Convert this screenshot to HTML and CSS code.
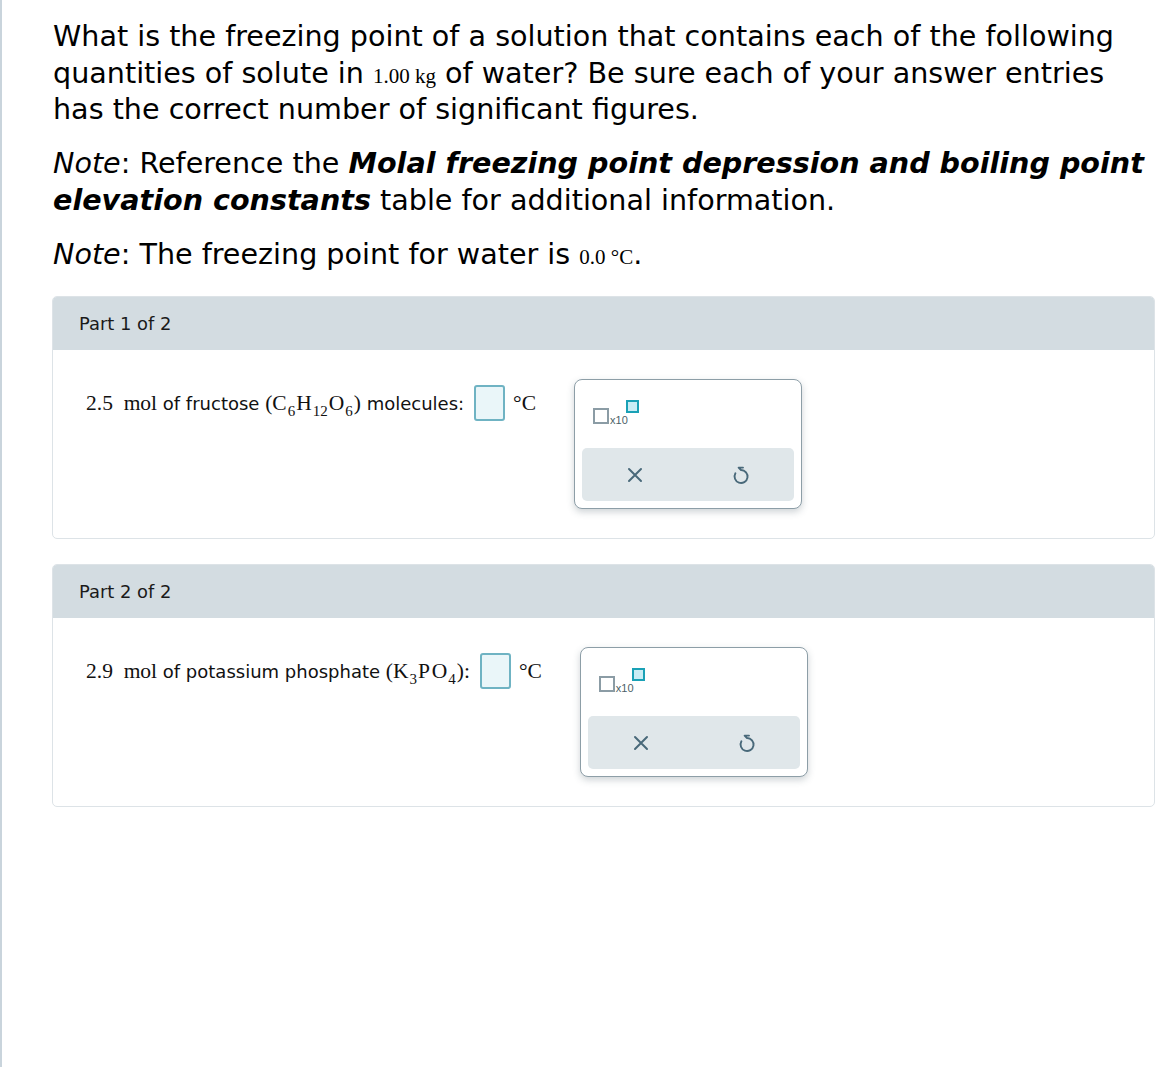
FILE: index.html
```html
<!DOCTYPE html>
<html>
<head>
<meta charset="utf-8">
<link rel="stylesheet" href="styles.css">
</head>
<body>
<div class="page">
  <p class="lead">What is the freezing point of a solution that contains each of the following quantities of solute in <span class="math">1.00 kg</span> of water? Be sure each of your answer entries has the correct number of significant figures.</p>
  <p class="lead"><i>Note</i>: Reference the <b><i>Molal freezing point depression and boiling point elevation constants</i></b> table for additional information.</p>
  <p class="lead"><i>Note</i>: The freezing point for water is <span class="math">0.0 °C</span>.</p>

  <section class="card">
    <div class="card-head">Part 1 of 2</div>
    <div class="card-body">
      <div class="question">
        <span class="q-text"><span class="m">2.5&nbsp;&nbsp;mol</span> of fructose <span class="m">(C<sub>6</sub>H<sub>12</sub>O<sub>6</sub>)</span> molecules:</span>
        <span class="answer"></span>
        <span class="m unit">°C</span>
      </div>
      <div class="tool">
        <div class="tool-top">
          <span class="sci"><span class="sq"></span><span class="x10">x10</span><span class="sup"></span></span>
        </div>
        <div class="tool-bar">
          <button class="tbtn"><svg width="16" height="16" viewBox="0 0 16 16"><path d="M2 2L14 14M14 2L2 14" stroke="#49697a" stroke-width="2" fill="none" stroke-linecap="round"/></svg></button>
          <button class="tbtn"><svg width="18" height="20" viewBox="0 0 18 20"><path d="M11 2.6H6.6L9 5A6.5 6.5 0 1 1 3.4 8.3" stroke="#49697a" stroke-width="1.9" fill="none" stroke-linecap="round" stroke-linejoin="round"/></svg></button>
        </div>
      </div>
    </div>
  </section>

  <section class="card">
    <div class="card-head">Part 2 of 2</div>
    <div class="card-body">
      <div class="question">
        <span class="q-text"><span class="m">2.9&nbsp;&nbsp;mol</span> of potassium phosphate <span class="m">(K<sub>3</sub>P&#8202;O<sub>4</sub>):</span></span>
        <span class="answer"></span>
        <span class="m unit">°C</span>
      </div>
      <div class="tool">
        <div class="tool-top">
          <span class="sci"><span class="sq"></span><span class="x10">x10</span><span class="sup"></span></span>
        </div>
        <div class="tool-bar">
          <button class="tbtn"><svg width="16" height="16" viewBox="0 0 16 16"><path d="M2 2L14 14M14 2L2 14" stroke="#49697a" stroke-width="2" fill="none" stroke-linecap="round"/></svg></button>
          <button class="tbtn"><svg width="18" height="20" viewBox="0 0 18 20"><path d="M11 2.6H6.6L9 5A6.5 6.5 0 1 1 3.4 8.3" stroke="#49697a" stroke-width="1.9" fill="none" stroke-linecap="round" stroke-linejoin="round"/></svg></button>
        </div>
      </div>
    </div>
  </section>
</div>
</body>
</html>
```
FILE: styles.css
```css
html, body {
  margin: 0;
  padding: 0;
  background: #fff;
}
body {
  font-family: "DejaVu Sans", Verdana, sans-serif;
  color: #000;
}
.page {
  border-left: 2px solid #c9d4dc;
  min-height: 1067px;
  box-sizing: border-box;
  padding: 18px 15px 0 50px;
}
.lead {
  margin: 0 0 17.5px 1px;
  font-size: 28.6px;
  line-height: 36.5px;
}
.lead:last-of-type {
  margin-bottom: 24px;
}
.math {
  font-family: "Liberation Serif", "Times New Roman", serif;
  font-size: 21px;
  line-height: 1;
}
.card {
  border: 1px solid #dde3e7;
  border-radius: 5px;
  margin-bottom: 25px;
  overflow: hidden;
}
.card-head {
  background: #d3dce1;
  height: 53px;
  display: flex;
  align-items: center;
  padding-left: 26px;
  font-size: 17.9px;
  color: #1a1a1a;
}
.card-body {
  display: flex;
  align-items: flex-start;
  padding: 29px 20px 29px 33px;
}
.question {
  display: flex;
  align-items: center;
  margin-top: 6px;
  font-size: 18px;
  color: #111;
}
.m {
  font-family: "Liberation Serif", "Times New Roman", serif;
  font-size: 21.5px;
}
.m sub {
  font-size: 15px;
  vertical-align: -6px;
  line-height: 0;
  margin: 0 1px;
}
.answer {
  width: 27px;
  height: 32px;
  border: 2px solid #6fb3c3;
  border-radius: 3px;
  background: #eaf6f9;
  margin: 0 8px 0 10px;
}
.tool {
  margin-left: 38px;
  width: 228px;
  height: 130px;
  box-sizing: border-box;
  border: 1px solid #8d9ea7;
  border-radius: 8px;
  box-shadow: 0 3px 7px rgba(60, 80, 90, 0.25);
  padding: 7px;
  display: flex;
  flex-direction: column;
  background: #fff;
}
.tool-top {
  height: 61px;
  padding: 12px 0 0 11px;
  box-sizing: border-box;
}
.sci {
  display: inline-flex;
  align-items: flex-end;
  padding-top: 1px;
}
.sq {
  width: 12px;
  height: 12px;
  border: 2px solid #8b9ca5;
  margin-top: 6px;
}
.x10 {
  font-family: "Liberation Sans", Arial, sans-serif;
  font-size: 11px;
  line-height: 10px;
  color: #4c5f68;
  margin-left: 1px;
  margin-bottom: -1px;
}
.sup {
  width: 9px;
  height: 9px;
  border: 2px solid #1aa1b6;
  background: #c9edf5;
  margin-left: -2px;
  margin-bottom: 11px;
}
.tool-bar {
  flex: 1;
  background: #e0e7ea;
  border-radius: 5px;
  display: flex;
}
.tbtn {
  flex: 1;
  border: 0;
  background: transparent;
  padding: 0;
  display: flex;
  align-items: center;
  justify-content: center;
}
```
